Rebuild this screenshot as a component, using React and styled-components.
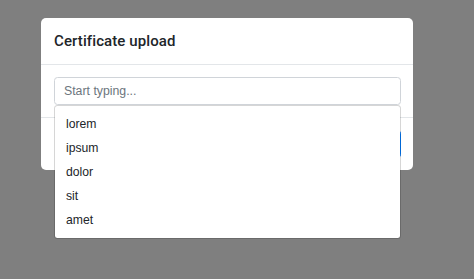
import React from "react";
import styled, { createGlobalStyle } from "styled-components";

const Global = createGlobalStyle`
  html, body { margin: 0; padding: 0; }
  body {
    font-family: "Liberation Sans", Arial, sans-serif;
    color: #212529;
    background: #7f7f7f;
  }
  * { box-sizing: border-box; }
`;

const Backdrop = styled.div`
  width: 474px;
  height: 279px;
  background: #7f7f7f;
  padding: 18px 0 0 41px;
  overflow: hidden;
`;

const Modal = styled.div`
  width: 372px;
  background: #fff;
  border-radius: 5px;
  display: flex;
  flex-direction: column;
`;

const Header = styled.div`
  height: 47px;
  padding: 0 13px;
  display: flex;
  align-items: center;
  border-bottom: 1px solid #e3e6e9;
`;

const Title = styled.h5`
  margin: 0;
  font-family: Roboto, "Liberation Sans", sans-serif;
  font-weight: 500;
  font-size: 15px;
  color: #212529;
  letter-spacing: 0.1px;
`;

const Body = styled.div`
  padding: 12px 12px 12px 13px;
`;

const Field = styled.div`
  position: relative;
`;

const Input = styled.input`
  display: block;
  width: 100%;
  height: 28px;
  padding: 0 9px;
  border: 1px solid #d0d4d9;
  border-radius: 3.5px;
  font-family: "Liberation Sans", Arial, sans-serif;
  font-size: 12.3px;
  color: #495057;
  outline: none;
  background: #fff;
  &::placeholder { color: #6c757d; }
`;

const Menu = styled.ul`
  position: absolute;
  top: 100%;
  left: 0;
  right: 0;
  margin: 0;
  padding: 6px 0;
  list-style: none;
  background: #fff;
  background-clip: padding-box;
  border: 1px solid rgba(0, 0, 0, 0.16);
  border-radius: 3.5px;
  z-index: 10;
`;

const Item = styled.li`
  height: 24px;
  line-height: 24px;
  padding: 0 11px;
  font-size: 12.2px;
  color: #212529;
`;

const Footer = styled.div`
  border-top: 1px solid #e3e6e9;
  padding: 9px;
  display: flex;
  justify-content: flex-end;
`;

const Button = styled.button`
  margin: 3px;
  height: 28px;
  padding: 0 9px;
  border: 1px solid #007bff;
  border-radius: 3.5px;
  background: #007bff;
  color: #fff;
  font-family: "Liberation Sans", Arial, sans-serif;
  font-size: 12px;
`;

const options = ["lorem", "ipsum", "dolor", "sit", "amet"];

export default function App() {
  return (
    <>
      <Global />
      <Backdrop>
        <Modal>
          <Header>
            <Title>Certificate upload</Title>
          </Header>
          <Body>
            <Field>
              <Input placeholder="Start typing..." />
              <Menu>
                {options.map((o) => (
                  <Item key={o}>{o}</Item>
                ))}
              </Menu>
            </Field>
          </Body>
          <Footer>
            <Button>Upload</Button>
          </Footer>
        </Modal>
      </Backdrop>
    </>
  );
}
